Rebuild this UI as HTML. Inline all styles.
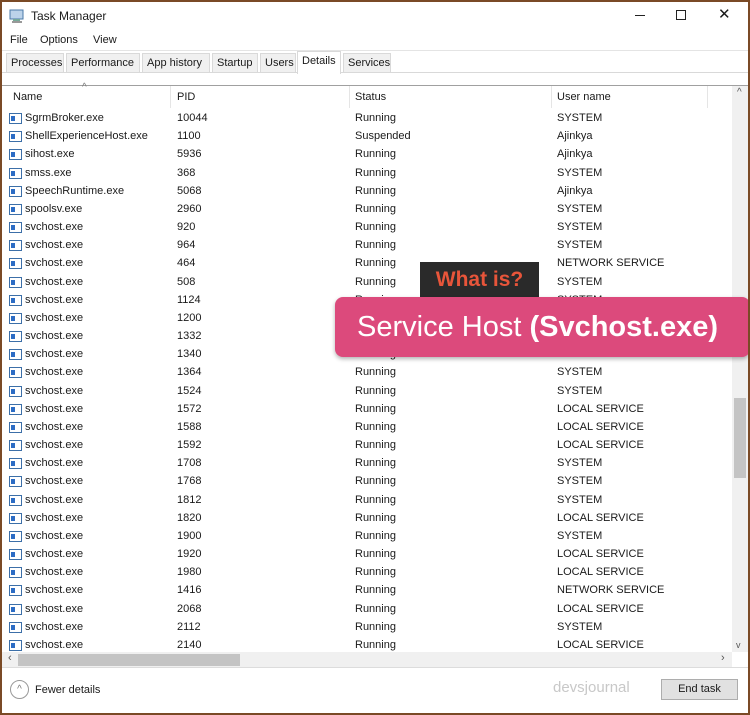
<!DOCTYPE html><html><head><style>
*{margin:0;padding:0;box-sizing:border-box}
body{width:750px;height:715px;overflow:hidden;background:#fff;font-family:"Liberation Sans",sans-serif;font-size:11px;color:#1a1a1a;position:relative}
.a{position:absolute;white-space:nowrap}
.frame{position:absolute;left:0;top:0;width:750px;height:715px;border:2px solid #7a4a26;pointer-events:none}
.tab{position:absolute;top:53px;height:20px;background:#f0f0f0;border:1px solid #d9d9d9;padding:3px 4px;font-size:11px}
.row{position:absolute;left:0;width:707px;height:18px}
.row span{position:absolute;top:2px}
.ic{position:absolute;left:9px;top:3px;width:13px;height:11px;border:1px solid #3c6fa8;background:#fff}
.ic:before{content:"";position:absolute;left:1px;top:2px;width:4px;height:5px;background:#2c6cc4}
</style></head><body>
<svg class="a" style="left:9px;top:8px" width="16" height="16"><rect x="1" y="2" width="13" height="9" fill="#bcd3ea" stroke="#4a7aa8"/><rect x="4" y="11" width="7" height="2" fill="#7a9"/><rect x="3" y="13" width="10" height="2" fill="#999"/></svg>
<div class="a" style="left:31px;top:9px;font-size:12px">Task Manager</div>
<div class="a" style="left:635px;top:15px;width:10px;height:1px;background:#222"></div>
<div class="a" style="left:676px;top:10px;width:10px;height:10px;border:1px solid #222"></div>
<div class="a" style="left:718px;top:5px;font-size:15px">✕</div>
<div class="a" style="left:10px;top:34px">File</div>
<div class="a" style="left:40px;top:34px">Options</div>
<div class="a" style="left:93px;top:34px">View</div>
<div class="a" style="left:0;top:50px;width:750px;height:1px;background:#e4e4e4"></div>
<div class="a" style="left:0;top:72px;width:750px;height:1px;background:#d9d9d9"></div>
<div class="tab" style="left:6px;width:58px">Processes</div>
<div class="tab" style="left:66px;width:74px">Performance</div>
<div class="tab" style="left:142px;width:68px">App history</div>
<div class="tab" style="left:212px;width:46px">Startup</div>
<div class="tab" style="left:260px;width:36px">Users</div>
<div class="tab" style="left:297px;top:51px;height:23px;width:44px;background:#fff;border-bottom:none">Details</div>
<div class="tab" style="left:343px;width:48px">Services</div>
<div class="a" style="left:0;top:85px;width:750px;height:1px;background:#a0a0a0"></div>
<div class="a" style="left:82px;top:82px;font-size:10px;color:#777">^</div>
<div class="a" style="left:13px;top:91px">Name</div>
<div class="a" style="left:177px;top:91px">PID</div>
<div class="a" style="left:355px;top:91px">Status</div>
<div class="a" style="left:557px;top:91px">User name</div>
<div class="a" style="left:170px;top:86px;width:1px;height:22px;background:#e5e5e5"></div>
<div class="a" style="left:349px;top:86px;width:1px;height:22px;background:#e5e5e5"></div>
<div class="a" style="left:551px;top:86px;width:1px;height:22px;background:#e5e5e5"></div>
<div class="a" style="left:707px;top:86px;width:1px;height:22px;background:#e5e5e5"></div>
<div id="rows"></div>
<div class="a" style="left:732px;top:86px;width:16px;height:566px;background:#f0f0f0"></div>
<div class="a" style="left:737px;top:87px;font-size:10px;color:#555">^</div>
<div class="a" style="left:734px;top:398px;width:12px;height:80px;background:#c4c4c4"></div>
<div class="a" style="left:736px;top:640px;font-size:9px;color:#555">v</div>
<div class="a" style="left:0;top:652px;width:732px;height:15px;background:#f0f0f0"></div>
<div class="a" style="left:18px;top:654px;width:222px;height:12px;background:#c4c4c4"></div>
<div class="a" style="left:8px;top:652px;font-size:11px;color:#555">‹</div>
<div class="a" style="left:721px;top:652px;font-size:11px;color:#555">›</div>
<div class="a" style="left:0;top:667px;width:750px;height:1px;background:#dcdcdc"></div>
<div class="a" style="left:10px;top:680px;width:19px;height:19px;border:1px solid #999;border-radius:50%;font-size:10px;color:#777;text-align:center;line-height:17px">^</div>
<div class="a" style="left:35px;top:684px">Fewer details</div>
<div class="a" style="left:553px;top:679px;font-size:15px;color:#c8c8c8">devsjournal</div>
<div class="a" style="left:661px;top:679px;width:77px;height:21px;background:#e1e1e1;border:1px solid #adadad;text-align:center;line-height:19px">End task</div>
<div class="a" style="left:420px;top:262px;width:119px;height:36px;background:#2a2a2a;color:#e8553a;font-weight:bold;font-size:21px;text-align:center;line-height:36px">What is?</div>
<div class="a" style="left:335px;top:297px;width:415px;height:60px;background:#dc4a7c;border-radius:8px;color:#fff;font-size:29px;line-height:60px;padding-left:22px;box-shadow:0 2px 4px rgba(0,0,0,.3)">Service Host <b>(Svchost.exe)</b></div>
<div class="frame"></div>
<script>
var d=[["SgrmBroker.exe",10044,"Running","SYSTEM"],["ShellExperienceHost.exe",1100,"Suspended","Ajinkya"],["sihost.exe",5936,"Running","Ajinkya"],["smss.exe",368,"Running","SYSTEM"],["SpeechRuntime.exe",5068,"Running","Ajinkya"],["spoolsv.exe",2960,"Running","SYSTEM"],["svchost.exe",920,"Running","SYSTEM"],["svchost.exe",964,"Running","SYSTEM"],["svchost.exe",464,"Running","NETWORK SERVICE"],["svchost.exe",508,"Running","SYSTEM"],["svchost.exe",1124,"Running","SYSTEM"],["svchost.exe",1200,"Running","SYSTEM"],["svchost.exe",1332,"Running","SYSTEM"],["svchost.exe",1340,"Running","SYSTEM"],["svchost.exe",1364,"Running","SYSTEM"],["svchost.exe",1524,"Running","SYSTEM"],["svchost.exe",1572,"Running","LOCAL SERVICE"],["svchost.exe",1588,"Running","LOCAL SERVICE"],["svchost.exe",1592,"Running","LOCAL SERVICE"],["svchost.exe",1708,"Running","SYSTEM"],["svchost.exe",1768,"Running","SYSTEM"],["svchost.exe",1812,"Running","SYSTEM"],["svchost.exe",1820,"Running","LOCAL SERVICE"],["svchost.exe",1900,"Running","SYSTEM"],["svchost.exe",1920,"Running","LOCAL SERVICE"],["svchost.exe",1980,"Running","LOCAL SERVICE"],["svchost.exe",1416,"Running","NETWORK SERVICE"],["svchost.exe",2068,"Running","LOCAL SERVICE"],["svchost.exe",2112,"Running","SYSTEM"],["svchost.exe",2140,"Running","LOCAL SERVICE"]];
var h="";d.forEach(function(r,i){h+='<div class="row" style="top:'+(110+i*18.17)+'px"><div class="ic"></div><span style="left:25px">'+r[0]+'</span><span style="left:177px">'+r[1]+'</span><span style="left:355px">'+r[2]+'</span><span style="left:557px">'+r[3]+'</span></div>';});
document.getElementById("rows").innerHTML=h;
</script>
</body></html>
